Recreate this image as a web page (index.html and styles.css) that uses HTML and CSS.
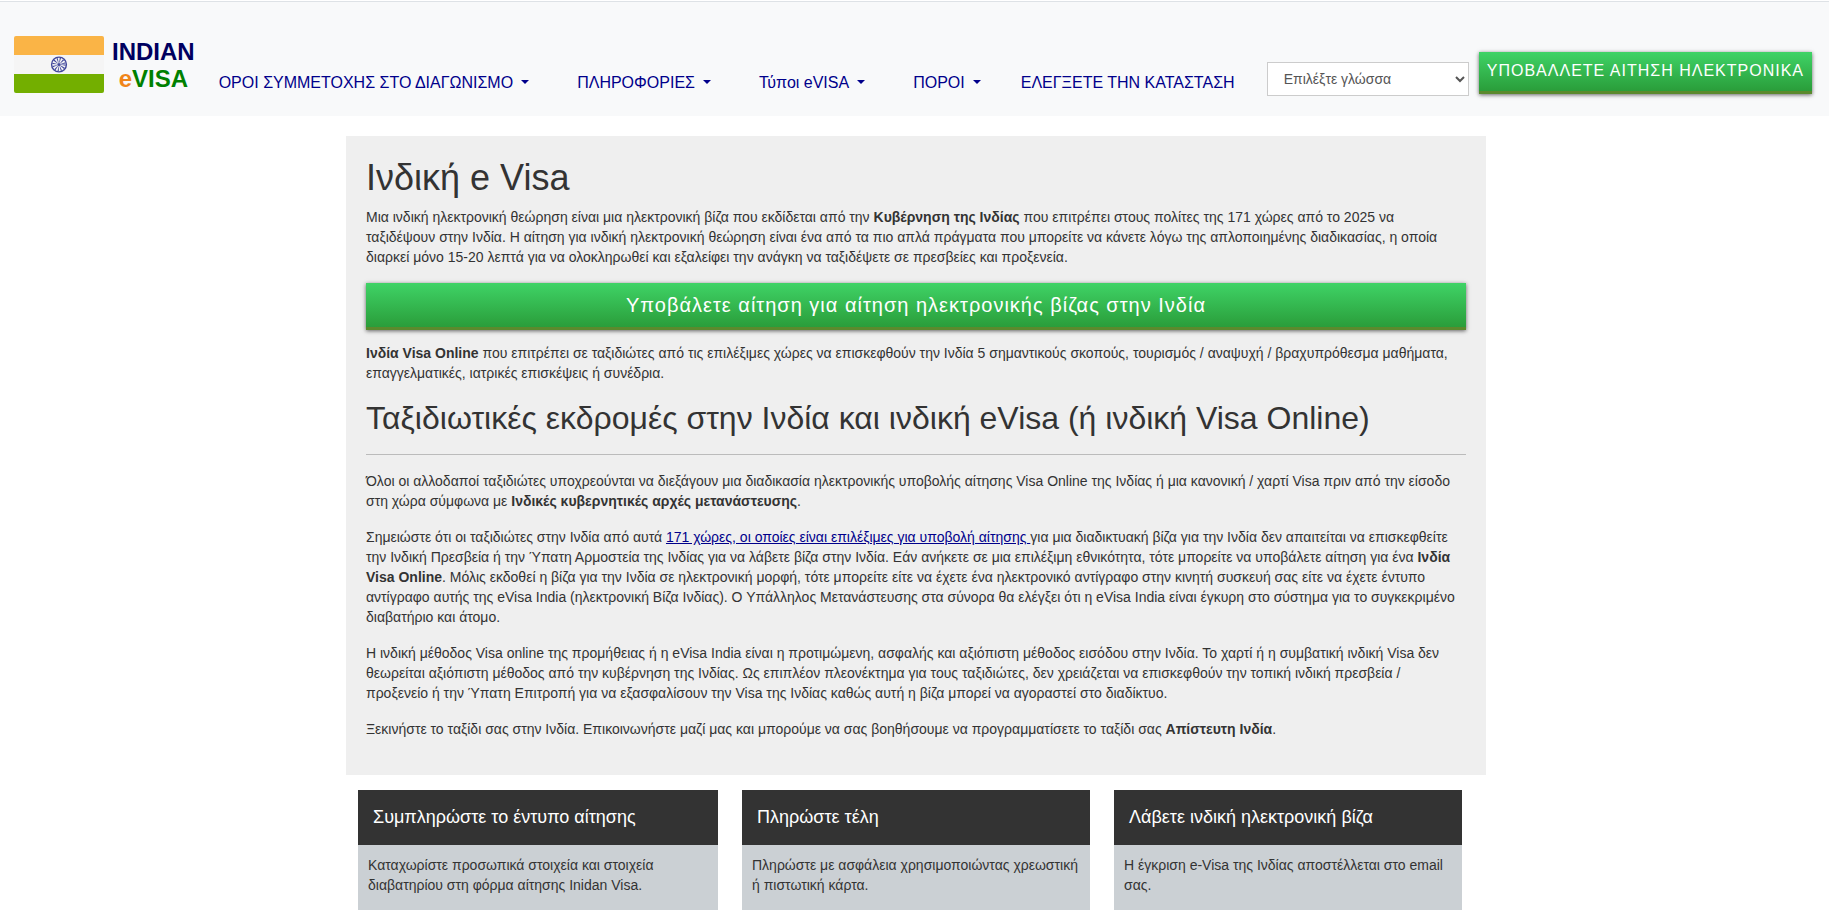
FILE: index.html
```html
<!DOCTYPE html>
<html lang="el">
<head>
    <meta charset="UTF-8">
    <meta name="viewport" content="width=device-width, initial-scale=1.0">
    <title>Ινδική e Visa</title>
    <link rel="stylesheet" href="styles.css">
</head>
<body>
    <header class="header">
        <a class="brand" href="#">
            <svg class="flag" viewBox="0 0 90 57" width="90" height="57" aria-hidden="true">
                <clipPath id="flagClip"><rect width="90" height="57" rx="2"/></clipPath>
                <g clip-path="url(#flagClip)">
                    <rect width="90" height="19" fill="#fab446"/>
                    <rect y="19" width="90" height="19" fill="#f5f5f5"/>
                    <rect y="38" width="90" height="19" fill="#73af00"/>
                </g>
                <g fill="none" stroke="#41479b">
                    <circle cx="45" cy="28.5" r="7.4" stroke-width="1.4"/>
                    <circle cx="45" cy="28.5" r="4.2" stroke-width="5" stroke-dasharray="0.8 1.4"/>
                </g>
                <circle cx="45" cy="28.5" r="1.6" fill="#41479b"/>
            </svg>
            <span class="brand-text">INDIAN<br><span class="brand-e">e</span><span class="brand-visa">VISA</span></span>
        </a>
        <nav class="menu">
            <a class="dropdown" href="#">ΟΡΟΙ ΣΥΜΜΕΤΟΧΗΣ ΣΤΟ ΔΙΑΓΩΝΙΣΜΟ</a>
            <a class="dropdown" href="#">ΠΛΗΡΟΦΟΡΙΕΣ</a>
            <a class="dropdown" href="#">Τύποι eVISA</a>
            <a class="dropdown" href="#">ΠΟΡΟΙ</a>
            <a class="status" href="#">ΕΛΕΓΞΕΤΕ ΤΗΝ ΚΑΤΑΣΤΑΣΗ</a>
        </nav>
        <select class="language" aria-label="Επιλέξτε γλώσσα">
            <option>Επιλέξτε γλώσσα</option>
        </select>
        <button class="apply apply-small" type="button">ΥΠΟΒΑΛΛΕΤΕ ΑΙΤΗΣΗ ΗΛΕΚΤΡΟΝΙΚΑ</button>
    </header>

    <main class="container">
        <section class="panel">
            <h1>Ινδική e Visa</h1>
            <p>Μια ινδική ηλεκτρονική θεώρηση είναι μια ηλεκτρονική βίζα που εκδίδεται από την <b>Κυβέρνηση της Ινδίας</b> που επιτρέπει στους πολίτες της 171 χώρες από το 2025 να ταξιδέψουν στην Ινδία. Η αίτηση για ινδική ηλεκτρονική θεώρηση είναι ένα από τα πιο απλά πράγματα που μπορείτε να κάνετε λόγω της απλοποιημένης διαδικασίας, η οποία διαρκεί μόνο 15-20 λεπτά για να ολοκληρωθεί και εξαλείφει την ανάγκη να ταξιδέψετε σε πρεσβείες και προξενεία.</p>
            <button class="apply apply-wide" type="button">Υποβάλετε αίτηση για αίτηση ηλεκτρονικής βίζας στην Ινδία</button>
            <p><b>Ινδία Visa Online</b> που επιτρέπει σε ταξιδιώτες από τις επιλέξιμες χώρες να επισκεφθούν την Ινδία 5 σημαντικούς σκοπούς, τουρισμός / αναψυχή / βραχυπρόθεσμα μαθήματα, επαγγελματικές, ιατρικές επισκέψεις ή συνέδρια.</p>
            <h2>Ταξιδιωτικές εκδρομές στην Ινδία και ινδική eVisa (ή ινδική Visa Online)</h2>
            <hr>
            <p>Όλοι οι αλλοδαποί ταξιδιώτες υποχρεούνται να διεξάγουν μια διαδικασία ηλεκτρονικής υποβολής αίτησης Visa Online της Ινδίας ή μια κανονική / χαρτί Visa πριν από την είσοδο στη χώρα σύμφωνα με <b>Ινδικές κυβερνητικές αρχές μετανάστευσης</b>.</p>
            <p>Σημειώστε ότι οι ταξιδιώτες στην Ινδία από αυτά <a href="#">171 χώρες, οι οποίες είναι επιλέξιμες για υποβολή αίτησης </a>για μια διαδικτυακή βίζα για την Ινδία δεν απαιτείται να επισκεφθείτε την Ινδική Πρεσβεία ή την Ύπατη Αρμοστεία της Ινδίας για να λάβετε βίζα στην Ινδία. Εάν ανήκετε σε μια επιλέξιμη εθνικότητα, τότε μπορείτε να υποβάλετε αίτηση για ένα <b>Ινδία Visa Online</b>. Μόλις εκδοθεί η βίζα για την Ινδία σε ηλεκτρονική μορφή, τότε μπορείτε είτε να έχετε ένα ηλεκτρονικό αντίγραφο στην κινητή συσκευή σας είτε να έχετε έντυπο αντίγραφο αυτής της eVisa India (ηλεκτρονική Βίζα Ινδίας). Ο Υπάλληλος Μετανάστευσης στα σύνορα θα ελέγξει ότι η eVisa India είναι έγκυρη στο σύστημα για το συγκεκριμένο διαβατήριο και άτομο.</p>
            <p>Η ινδική μέθοδος Visa online της προμήθειας ή η eVisa India είναι η προτιμώμενη, ασφαλής και αξιόπιστη μέθοδος εισόδου στην Ινδία. Το χαρτί ή η συμβατική ινδική Visa δεν θεωρείται αξιόπιστη μέθοδος από την κυβέρνηση της Ινδίας. Ως επιπλέον πλεονέκτημα για τους ταξιδιώτες, δεν χρειάζεται να επισκεφθούν την τοπική ινδική πρεσβεία / προξενείο ή την Ύπατη Επιτροπή για να εξασφαλίσουν την Visa της Ινδίας καθώς αυτή η βίζα μπορεί να αγοραστεί στο διαδίκτυο.</p>
            <p>Ξεκινήστε το ταξίδι σας στην Ινδία. Επικοινωνήστε μαζί μας και μπορούμε να σας βοηθήσουμε να προγραμματίσετε το ταξίδι σας <b>Απίστευτη Ινδία</b>.</p>
        </section>

        <section class="steps">
            <div class="step">
                <h3>Συμπληρώστε το έντυπο αίτησης</h3>
                <p>Καταχωρίστε προσωπικά στοιχεία και στοιχεία διαβατηρίου στη φόρμα αίτησης Inidan Visa.</p>
            </div>
            <div class="step">
                <h3>Πληρώστε τέλη</h3>
                <p>Πληρώστε με ασφάλεια χρησιμοποιώντας χρεωστική ή πιστωτική κάρτα.</p>
            </div>
            <div class="step">
                <h3>Λάβετε ινδική ηλεκτρονική βίζα</h3>
                <p>Η έγκριση e-Visa της Ινδίας αποστέλλεται στο email σας.</p>
            </div>
        </section>
    </main>
</body>
</html>
```
FILE: styles.css
```css
* {
    box-sizing: border-box;
}

body {
    margin: 0;
    padding-top: 1px;
    font-family: "Liberation Sans", Arial, sans-serif;
    font-size: 14px;
    line-height: 20px;
    color: #333;
    background-color: #fff;
}

a {
    color: #00008b;
}

/* header */
.header {
    display: flex;
    align-items: flex-start;
    height: 115px;
    padding: 0 17px 0 14px;
    background-color: #f8f9fa;
    border-top: 1px solid #dee2e6;
}

.brand {
    display: flex;
    gap: 8px;
    padding-top: 34px;
    text-decoration: none;
}

.brand-text {
    font-size: 24px;
    font-weight: bold;
    line-height: 27px;
    text-align: center;
    color: #000060;
    padding-top: 2px;
}

.brand-e {
    color: #f08519;
}

.brand-visa {
    color: #008000;
}

.menu {
    display: flex;
    flex: 1;
    gap: 48px;
    padding: 69px 0 0 24px;
}

.menu a {
    font-size: 16px;
    line-height: 24px;
    color: #00008b;
    text-decoration: none;
    white-space: nowrap;
}

.dropdown::after {
    content: "";
    display: inline-block;
    margin-left: 8px;
    vertical-align: 4px;
    border-top: 4px solid;
    border-left: 4px solid transparent;
    border-right: 4px solid transparent;
}

.menu .status {
    margin-left: -8px;
}

.language {
    width: 202px;
    height: 34px;
    margin: 60px 10px 0 0;
    padding: 0 12px;
    font-family: inherit;
    font-size: 14px;
    color: #555;
    background-color: #fff;
    border: 1px solid #ccc;
    border-radius: 0;
}

/* green buttons */
.apply {
    display: block;
    font-family: inherit;
    color: #fff;
    letter-spacing: 1px;
    cursor: pointer;
    border: 0;
    border-bottom: 3px solid #5b8a2d;
    background: linear-gradient(#3fd366, #2a9d3a);
    box-shadow: 0 1px 4px rgba(0, 0, 0, 0.6);
}

.apply-small {
    height: 42px;
    margin-top: 50px;
    padding: 0 8px 2px;
    font-size: 16px;
    white-space: nowrap;
}

.apply-wide {
    width: 100%;
    height: 47px;
    margin-bottom: 13px;
    font-size: 20px;
}

/* content */
.container {
    max-width: 1143px;
    margin: 20px auto 0;
    padding-left: 3px;
}

.panel {
    padding: 22px 20px 20px;
    background-color: #efefef;
}

.panel p {
    margin: 0 0 16px;
}

h1, h2, h3 {
    font-weight: normal;
    margin: 0;
}

h1 {
    font-size: 36px;
    line-height: 40px;
    padding-bottom: 9px;
}

h2 {
    font-size: 32px;
    line-height: 38px;
}

hr {
    margin: 17px 0 16px;
    border: 0;
    border-top: 1px solid #bbb;
}

/* three steps */
.steps {
    display: grid;
    grid-template-columns: 360fr 348fr 348fr;
    gap: 24px;
    padding: 15px 24px 0 12px;
}

.step {
    background-color: #cbd0d4;
}

.step h3 {
    padding: 15px;
    font-size: 18px;
    line-height: 25px;
    color: #fff;
    background-color: #333;
}

.step p {
    margin: 0;
    padding: 10px 10px 15px;
}
```
